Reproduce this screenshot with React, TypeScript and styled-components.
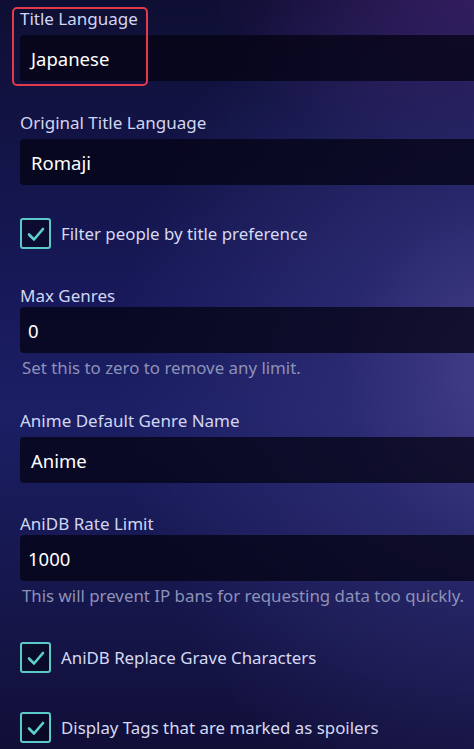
import React from "react";
import styled, { createGlobalStyle } from "styled-components";

const Global = createGlobalStyle`
  html, body { margin: 0; padding: 0; }
  body {
    width: 474px;
    height: 749px;
    overflow: hidden;
    font-family: "Noto Sans", "Open Sans", sans-serif;
  }
`;

const Page = styled.div`
  position: relative;
  width: 474px;
  height: 749px;
  overflow: hidden;
  padding-left: 20px;
  box-sizing: border-box;
  background-color: #141545;
  background-image:
    radial-gradient(ellipse 380px 460px at 105% 50%, rgba(70, 64, 138, 0.95) 0%, rgba(52, 50, 125, 0.6) 40%, rgba(30, 32, 100, 0) 100%),
    radial-gradient(ellipse 260px 160px at 100% 0%, rgba(58, 26, 96, 0.8) 0%, rgba(40, 20, 90, 0) 100%),
    linear-gradient(180deg, #0f0f34 0%, #17195a 40%, #1b1f64 55%, #110f38 100%);
`;

const Field = styled.div<{ $mb: number }>`
  display: flex;
  flex-direction: column;
  margin-bottom: ${(p) => p.$mb}px;
`;

const Label = styled.label<{ $gap: number }>`
  font-size: 17px;
  line-height: 23px;
  color: #d2d6f2;
  margin-bottom: ${(p) => p.$gap}px;
`;

const Input = styled.div<{ $pad: number }>`
  height: 46px;
  margin-right: -20px;
  display: flex;
  align-items: center;
  padding-left: ${(p) => p.$pad}px;
  background: rgba(4, 3, 18, 0.74);
  border-radius: 4px 0 0 4px;
  font-size: 18.5px;
  color: #ffffff;
`;

const Help = styled.div`
  font-size: 16.85px;
  line-height: 23px;
  color: #8d92b8;
  margin-top: 3px;
  padding-left: 2px;
`;

const CheckRow = styled.div<{ $mb: number }>`
  display: flex;
  align-items: center;
  gap: 10px;
  margin-bottom: ${(p) => p.$mb}px;
`;

const Box = styled.span`
  width: 31px;
  height: 31px;
  box-sizing: border-box;
  border: 2px solid #5cc9c9;
  border-radius: 3px;
  background: rgba(5, 5, 25, 0.6);
  display: flex;
  align-items: center;
  justify-content: center;
  flex-shrink: 0;
`;

const CheckText = styled.span`
  font-size: 16.85px;
  line-height: 23px;
  color: #d6daf4;
`;

const Highlight = styled.div`
  position: absolute;
  left: 12px;
  top: 7px;
  width: 136px;
  height: 79px;
  box-sizing: border-box;
  border: 2px solid #e23a4c;
  border-radius: 5px;
  pointer-events: none;
`;

const Spacer = styled.div<{ $h: number }>`
  height: ${(p) => p.$h}px;
`;

const Check = () => (
  <Box>
    <svg width="20" height="20" viewBox="0 0 20 20">
      <polyline
        points="3,10.5 8,15.5 17,5"
        fill="none"
        stroke="#5fd0cc"
        strokeWidth="2.6"
        strokeLinecap="round"
        strokeLinejoin="round"
      />
    </svg>
  </Box>
);

export default function App() {
  return (
    <>
      <Global />
      <Page>
        <Spacer $h={7} />
        <Field $mb={30}>
          <Label $gap={5}>Title Language</Label>
          <Input $pad={11}>Japanese</Input>
        </Field>
        <Field $mb={33}>
          <Label $gap={5}>Original Title Language</Label>
          <Input $pad={11}>Romaji</Input>
        </Field>
        <CheckRow $mb={35}>
          <Check />
          <CheckText>Filter people by title preference</CheckText>
        </CheckRow>
        <Field $mb={30}>
          <Label $gap={0}>Max Genres</Label>
          <Input $pad={8}>0</Input>
          <Help>Set this to zero to remove any limit.</Help>
        </Field>
        <Field $mb={29}>
          <Label $gap={5}>Anime Default Genre Name</Label>
          <Input $pad={11}>Anime</Input>
        </Field>
        <Field $mb={35}>
          <Label $gap={0}>AniDB Rate Limit</Label>
          <Input $pad={8}>1000</Input>
          <Help>This will prevent IP bans for requesting data too quickly.</Help>
        </Field>
        <CheckRow $mb={39}>
          <Check />
          <CheckText>AniDB Replace Grave Characters</CheckText>
        </CheckRow>
        <CheckRow $mb={0}>
          <Check />
          <CheckText>Display Tags that are marked as spoilers</CheckText>
        </CheckRow>
        <Highlight />
      </Page>
    </>
  );
}
